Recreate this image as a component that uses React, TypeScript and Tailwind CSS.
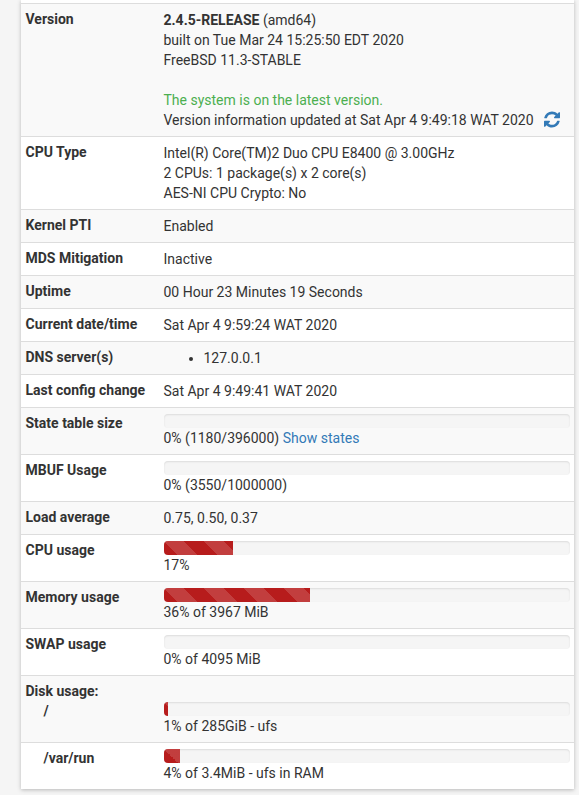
import type { ReactNode } from "react";

function Bar({ pct }: { pct: number }) {
  return (
    <div className="h-[14px] w-[406px] overflow-hidden rounded-[4px] bg-[#f5f5f5] shadow-[inset_0_1px_2px_rgba(0,0,0,0.1)]">
      {pct > 0 && (
        <div
          className="h-full bg-[#b71c1c] bg-[linear-gradient(45deg,rgba(255,255,255,.15)_25%,transparent_25%,transparent_50%,rgba(255,255,255,.15)_50%,rgba(255,255,255,.15)_75%,transparent_75%,transparent)] bg-[length:40px_40px]"
          style={{ width: `${pct}%` }}
        />
      )}
    </div>
  );
}

function Row({ label, odd, children }: { label: ReactNode; odd?: boolean; children: ReactNode }) {
  return (
    <div className={`flex border-t border-[#ddd] pt-[6px] pb-[6px] ${odd ? "bg-[#f9f9f9]" : "bg-white"}`}>
      <div className="-mt-px w-[142.5px] shrink-0 pl-[4.5px] font-bold">{label}</div>
      <div className="min-w-0 flex-1">{children}</div>
    </div>
  );
}

export default function App() {
  return (
    <div className="min-h-[795px] bg-[#f5f5f5] pl-[21px] pr-[5px] pb-[6px] font-['Roboto',sans-serif] text-[14px] leading-[20px] text-[#333]">
      <div className="bg-white shadow-[0_1px_4px_rgba(0,0,0,0.25)]">
        <div className="h-[3px]" />
        <Row label="Version" odd>
          <div>
            <b>2.4.5-RELEASE</b> (amd64)
          </div>
          <div>built on Tue Mar 24 15:25:50 EDT 2020</div>
          <div>FreeBSD 11.3-STABLE</div>
          <div className="h-[20px]" />
          <div className="text-[#4caf50]">The system is on the latest version.</div>
          <div className="flex h-[20px] items-center">
            Version information updated at Sat Apr 4 9:49:18 WAT 2020
            <svg viewBox="0 0 1536 1792" className="mb-[2px] ml-[10px] h-[19px] w-[16px] fill-[#337ab7]">
              <path d="M1511 1056q0 5-1 7-64 268-268 434.5t-478 166.5q-146 0-282.5-55t-243.5-157l-129 129q-19 19-45 19t-45-19-19-45v-448q0-26 19-45t45-19h448q26 0 45 19t19 45-19 45l-137 137q71 66 161 102t187 36q134 0 250-65t186-179q11-17 53-117 8-23 30-23h192q13 0 22.5 9.5t9.5 22.5zm25-800v448q0 26-19 45t-45 19h-448q-26 0-45-19t-19-45 19-45l138-138q-148-137-349-137-134 0-250 65t-186 179q-11 17-53 117-8 23-30 23h-199q-13 0-22.5-9.5t-9.5-22.5v-7q65-268 270-434.5t480-166.5q146 0 284 55.5t245 156.5l130-129q19-19 45-19t45 19 19 45z" />
            </svg>
          </div>
        </Row>
        <Row label="CPU Type">
          <div>Intel(R) Core(TM)2 Duo CPU E8400 @ 3.00GHz</div>
          <div>2 CPUs: 1 package(s) x 2 core(s)</div>
          <div>AES-NI CPU Crypto: No</div>
        </Row>
        <Row label="Kernel PTI" odd>Enabled</Row>
        <Row label="MDS Mitigation">Inactive</Row>
        <Row label="Uptime" odd>00 Hour 23 Minutes 19 Seconds</Row>
        <Row label="Current date/time">Sat Apr 4 9:59:24 WAT 2020</Row>
        <Row label="DNS server(s)" odd>
          <ul className="list-disc pl-[40px]">
            <li>127.0.0.1</li>
          </ul>
        </Row>
        <Row label="Last config change">Sat Apr 4 9:49:41 WAT 2020</Row>
        <Row label="State table size" odd>
          <Bar pct={0} />
          <div>
            0% (1180/396000) <a className="text-[#337ab7]">Show states</a>
          </div>
        </Row>
        <Row label="MBUF Usage">
          <Bar pct={0} />
          <div>0% (3550/1000000)</div>
        </Row>
        <Row label="Load average" odd>0.75, 0.50, 0.37</Row>
        <Row label="CPU usage">
          <Bar pct={17} />
          <div>17%</div>
        </Row>
        <Row label="Memory usage" odd>
          <Bar pct={36} />
          <div>36% of 3967 MiB</div>
        </Row>
        <Row label="SWAP usage">
          <Bar pct={0} />
          <div>0% of 4095 MiB</div>
        </Row>
        <Row
          odd
          label={
            <>
              <div>Disk usage:</div>
              <div className="pl-[18px]">/</div>
            </>
          }
        >
          <div className="mt-[20px]">
            <Bar pct={1} />
          </div>
          <div>1% of 285GiB - ufs</div>
        </Row>
        <Row label={<div className="pl-[18px]">/var/run</div>}>
          <Bar pct={4} />
          <div>4% of 3.4MiB - ufs in RAM</div>
        </Row>
      </div>
    </div>
  );
}
